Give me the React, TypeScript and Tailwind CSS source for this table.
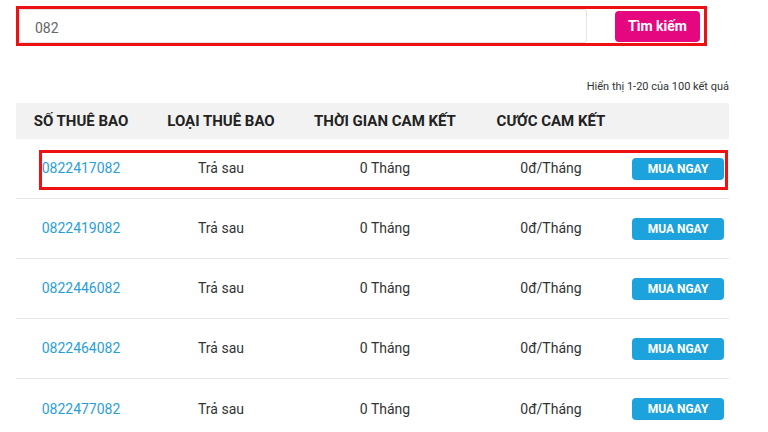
import React from 'react';

const numbers = ['0822417082', '0822419082', '0822446082', '0822464082', '0822477082'];

const headers = ['SỐ THUÊ BAO', 'LOẠI THUÊ BAO', 'THỜI GIAN CAM KẾT', 'CƯỚC CAM KẾT', ''];

const gridCols = 'grid grid-cols-[130px_150px_178px_154px_101px]';

export default function App() {
  return (
    <div className="w-[768px] h-[432px] overflow-hidden bg-white font-['Roboto',sans-serif] text-[#333]">
      {/* Search bar */}
      <div className="pt-[6px] pl-4">
        <div className="flex items-center w-[691px] h-[40px] border-[3px] border-[#ee1111]">
          <div className="flex items-center w-[568px] h-[34px] border border-[#e4e4e4] rounded-[3px] pl-[15px] pt-[4px] text-[14px] text-[#666]">
            082
          </div>
          <button className="ml-[28px] w-[85px] h-[31px] rounded-[4px] bg-[#e5077f] text-white text-[14px] font-bold">
            Tìm kiếm
          </button>
        </div>
      </div>

      {/* Result count */}
      <div className="w-[729px] mt-[34px] text-right text-[11px] text-[#333] leading-[14px]">
        Hiển thị 1-20 của 100 kết quả
      </div>

      {/* Table */}
      <div className="ml-4 mt-[9px] w-[713px]">
        <div className={`${gridCols} h-[36px] items-center bg-[#f2f2f2] text-[15px] font-bold text-[#222]`}>
          {headers.map((h, i) => (
            <div key={i} className="text-center whitespace-nowrap">
              {h}
            </div>
          ))}
        </div>

        {numbers.map((num, i) => (
          <div
            key={num}
            className={`relative ${gridCols} h-[60px] items-center text-[14px] ${
              i < numbers.length - 1 ? 'border-b border-[#e6e6e6]' : ''
            }`}
          >
            <div className="text-center text-[#2b9ed9]">{num}</div>
            <div className="text-center">Trả sau</div>
            <div className="text-center">0 Tháng</div>
            <div className="text-center">0đ/Tháng</div>
            <div className="flex justify-end pr-[5px]">
              <button className="w-[92px] h-[22px] rounded-[4px] bg-[#1ca2dd] text-white text-[12px] font-bold">
                MUA NGAY
              </button>
            </div>
            {i === 0 && (
              <div className="absolute left-[23px] top-[11px] w-[689px] h-[40px] border-[3px] border-[#ee1111] pointer-events-none" />
            )}
          </div>
        ))}
      </div>
    </div>
  );
}
